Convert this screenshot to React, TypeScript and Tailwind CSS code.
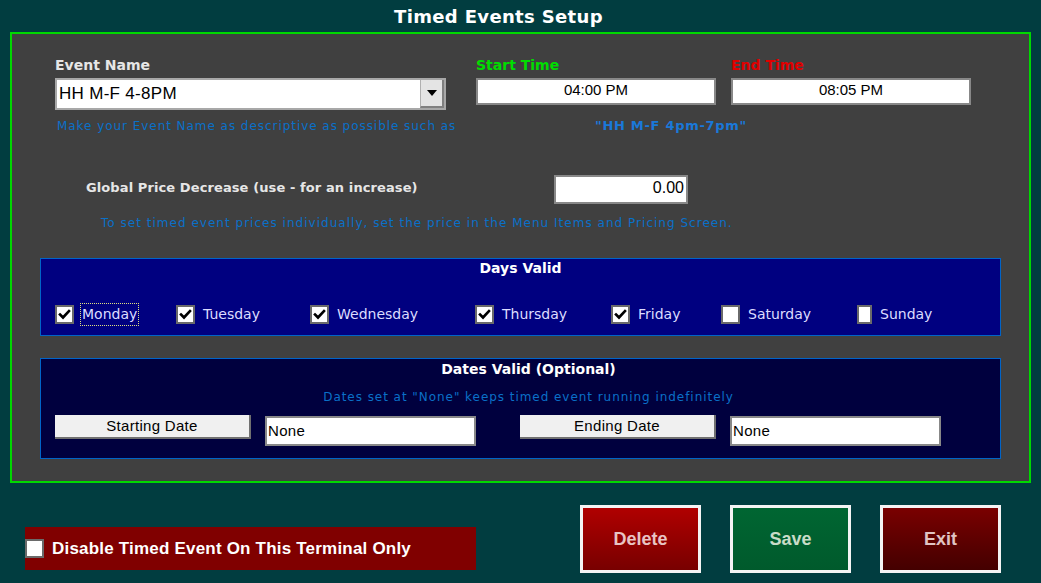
import React from "react";

function Check() {
  return (
    <svg width="13" height="13" viewBox="0 0 13 13">
      <path d="M2 6.5 L5 9.5 L11 3" fill="none" stroke="#000" strokeWidth="2.6" strokeLinecap="square" />
    </svg>
  );
}

function Box({ checked, narrow }: { checked: boolean; narrow?: boolean }) {
  return (
    <div
      className={`${narrow ? "w-[15px]" : "w-[19px]"} h-[19px] shrink-0 border-2 border-[#6a6a6a] bg-white flex items-center justify-center`}
    >
      {checked ? <Check /> : null}
    </div>
  );
}

const days = [
  { name: "Monday", w: "w-[121px]", checked: true, focus: true },
  { name: "Tuesday", w: "w-[134px]", checked: true },
  { name: "Wednesday", w: "w-[165px]", checked: true },
  { name: "Thursday", w: "w-[136px]", checked: true },
  { name: "Friday", w: "w-[110px]", checked: true },
  { name: "Saturday", w: "w-[136px]", checked: false },
  { name: "Sunday", w: "w-[100px]", checked: false, narrow: true },
];

export default function App() {
  return (
    <div className="w-[1041px] h-[583px] bg-[#013d40] flex flex-col font-['Liberation_Sans',Arial,sans-serif] overflow-hidden">
      <div className="h-[32px] flex items-center justify-center pr-[44px] text-[18px] tracking-[0.35px] font-bold text-white font-['DejaVu_Sans',sans-serif]">
        Timed Events Setup
      </div>

      <div className="ml-[10px] w-[1021px] h-[451px] border-2 border-[#00d800] bg-[#404040] flex flex-col">
        {/* Row 1 */}
        <div className="mt-[23px] flex font-['DejaVu_Sans',sans-serif]">
          <div className="ml-[43px] w-[391px] flex flex-col">
            <div className="h-[21px] text-[14px] font-bold text-[#e6e6e6] leading-[16px]">Event Name</div>
            <div className="h-[32px] border-[2px] border-[#a8a8a8] bg-white flex items-center font-['Liberation_Sans',Arial,sans-serif]">
              <div className="flex-1 pl-[2px] text-[17px] tracking-[0.3px] text-black">HH M-F 4-8PM</div>
              <div className="w-[24px] h-[28px] bg-[#e4e4e4] border-l border-[#b0b0b0] border-r-2 border-b-2 border-r-[#808080] border-b-[#808080] flex items-center justify-center">
                <svg width="10" height="6" viewBox="0 0 10 6">
                  <path d="M0 0 L10 0 L5 6 Z" fill="#000" />
                </svg>
              </div>
            </div>
          </div>
          <div className="ml-[30px] w-[240px] flex flex-col">
            <div className="h-[21px] text-[14px] font-bold text-[#00dd00] leading-[16px]">Start Time</div>
            <div className="h-[27px] border-2 border-[#888888] bg-white flex items-center justify-center pb-[3px] text-[15px] text-black font-['Liberation_Sans',Arial,sans-serif]">
              04:00 PM
            </div>
          </div>
          <div className="ml-[15px] w-[240px] flex flex-col">
            <div className="h-[21px] text-[14px] font-bold text-[#e00000] leading-[16px]">End Time</div>
            <div className="h-[27px] border-2 border-[#888888] bg-white flex items-center justify-center pb-[3px] text-[15px] text-black font-['Liberation_Sans',Arial,sans-serif]">
              08:05 PM
            </div>
          </div>
        </div>

        {/* Hint row */}
        <div className="mt-[8px] h-[16px] flex items-center">
          <div className="ml-[45px] w-[538px] text-[12px] tracking-[0.95px] text-[#0a70c8] font-['DejaVu_Sans',sans-serif] whitespace-nowrap">
            Make your Event Name as descriptive as possible such as
          </div>
          <div className="text-[13px] tracking-[0.7px] font-bold text-[#1a78d8] whitespace-nowrap font-['DejaVu_Sans',sans-serif]">
            "HH M-F 4pm-7pm"
          </div>
        </div>

        {/* Global price */}
        <div className="mt-[41px] h-[29px] flex items-center">
          <div className="ml-[74px] w-[468px] mb-[4px] text-[13px] tracking-[0.1px] font-bold text-[#e6e6e6] font-['DejaVu_Sans',sans-serif] whitespace-nowrap">
            Global Price Decrease (use - for an increase)
          </div>
          <div className="w-[134px] h-[29px] border-2 border-[#888888] bg-white flex items-center justify-end pr-[2px] pb-[3px] text-[16px] text-black">
            0.00
          </div>
        </div>

        <div className="mt-[11px] h-[16px] flex items-center">
          <div className="ml-[89px] text-[12px] tracking-[1.02px] text-[#0a70c8] font-['DejaVu_Sans',sans-serif] whitespace-nowrap">
            To set timed event prices individually, set the price in the Menu Items and Pricing Screen.
          </div>
        </div>

        {/* Days Valid */}
        <div className="mt-[27px] ml-[28px] w-[961px] h-[78px] border border-[#0064c8] bg-[#000080] flex flex-col font-['DejaVu_Sans',sans-serif]">
          <div className="h-[19px] flex items-center justify-center text-[14px] font-bold text-white">Days Valid</div>
          <div className="mt-[25px] flex items-center pl-[14px]">
            {days.map((d) => (
              <div key={d.name} className={`${d.w} flex items-center`}>
                <Box checked={d.checked} narrow={d.narrow} />
                {d.focus ? (
                  <div className="ml-[6px] px-[1px] h-[23px] border border-dotted border-[#e0e080] flex items-center text-[14px] text-[#dcdcff]">
                    {d.name}
                  </div>
                ) : (
                  <div className="ml-[8px] text-[14px] text-[#dcdcff]">{d.name}</div>
                )}
              </div>
            ))}
          </div>
        </div>

        {/* Dates Valid */}
        <div className="mt-[22px] ml-[28px] w-[961px] h-[101px] border border-[#0064c8] bg-[#00003e] flex flex-col">
          <div className="h-[20px] pl-[16px] flex items-center justify-center text-[14px] font-bold text-white font-['DejaVu_Sans',sans-serif]">
            Dates Valid (Optional)
          </div>
          <div className="mt-[10px] h-[16px] pl-[16px] flex items-center justify-center text-[12px] tracking-[0.95px] text-[#0a70c8] font-['DejaVu_Sans',sans-serif]">
            Dates set at "None" keeps timed event running indefinitely
          </div>
          <div className="mt-[10px] flex items-start pl-[14px]">
            <div className="w-[196px] h-[24px] bg-[#f0f0f0] border-r-2 border-b-2 border-[#707070] flex items-center justify-center text-[15px] tracking-[0.3px] text-black">
              Starting Date
            </div>
            <div className="ml-[14px] mt-[1px] w-[211px] h-[30px] border-2 border-[#888888] bg-white flex items-center pl-[1px] text-[15px] tracking-[0.3px] text-black">
              None
            </div>
            <div className="ml-[44px] w-[196px] h-[24px] bg-[#f0f0f0] border-r-2 border-b-2 border-[#707070] flex items-center justify-center text-[15px] tracking-[0.3px] text-black">
              Ending Date
            </div>
            <div className="ml-[14px] mt-[1px] w-[211px] h-[30px] border-2 border-[#888888] bg-white flex items-center pl-[1px] text-[15px] tracking-[0.3px] text-black">
              None
            </div>
          </div>
        </div>
      </div>

      {/* Bottom */}
      <div className="flex items-start">
        <div className="ml-[25px] mt-[44px] w-[451px] h-[43px] bg-[#800000] flex items-center">
          <div className="w-[19px] h-[19px] border-2 border-[#6a6a6a] bg-white" />
          <div className="ml-[8px] text-[17px] tracking-[0.2px] font-bold text-white">
            Disable Timed Event On This Terminal Only
          </div>
        </div>
        <div className="ml-[104px] mt-[22px] flex gap-[29px]">
          <div className="w-[121px] h-[68px] border-[3px] border-[#f4f4f4] bg-gradient-to-b from-[#b00000] to-[#780000] flex items-center justify-center text-[18px] font-bold text-[#e8c4c4]">
            Delete
          </div>
          <div className="w-[121px] h-[68px] border-[3px] border-[#f4f4f4] bg-gradient-to-b from-[#006632] to-[#005a2c] flex items-center justify-center text-[18px] font-bold text-[#c8dcc8]">
            Save
          </div>
          <div className="w-[121px] h-[68px] border-[3px] border-[#f4f4f4] bg-gradient-to-b from-[#7a0000] to-[#440000] flex items-center justify-center text-[18px] font-bold text-[#e0c4c4]">
            Exit
          </div>
        </div>
      </div>
    </div>
  );
}
